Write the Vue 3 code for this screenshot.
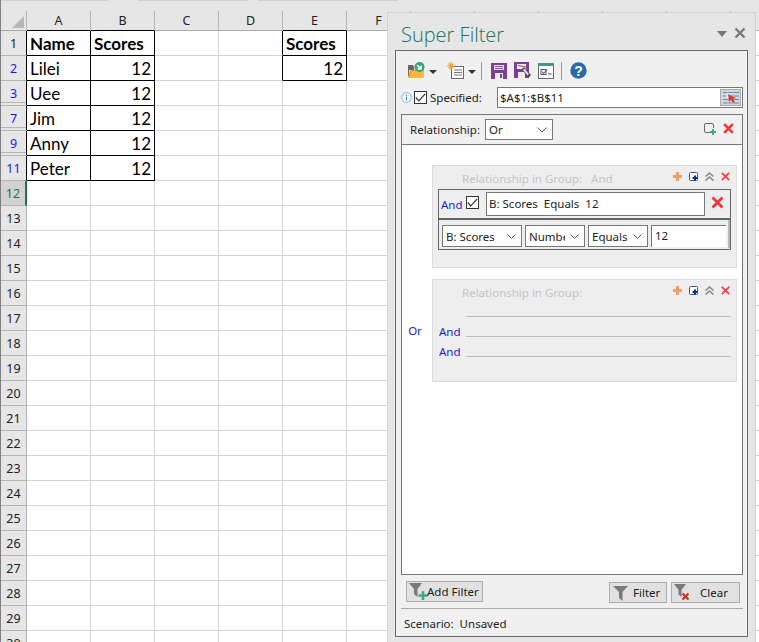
<script setup>
const colNames = ['A', 'B', 'C', 'D', 'E', 'F', 'G', 'H', 'I', 'J', 'K', 'L']
const rowNames = [1, 2, 3, 7, 9, 11]
for (let n = 12; n <= 30; n++) rowNames.push(n)

const filteredRows = [2, 3, 7, 9, 11]
const hiddenAfter = [3, 7, 9]

const data = {
  '0-0': { text: 'Name', bold: true },
  '0-1': { text: 'Scores', bold: true },
  '1-0': { text: 'Lilei' },
  '1-1': { text: '12', num: true },
  '2-0': { text: 'Uee' },
  '2-1': { text: '12', num: true },
  '3-0': { text: 'Jim' },
  '3-1': { text: '12', num: true },
  '4-0': { text: 'Anny' },
  '4-1': { text: '12', num: true },
  '5-0': { text: 'Peter' },
  '5-1': { text: '12', num: true },
  '0-4': { text: 'Scores', bold: true },
  '1-4': { text: '12', num: true }
}

const cellAt = (r, c) => data[r + '-' + c] || { text: '' }
const isBoxed = (r, c) => (r < 6 && c < 2) || (r < 2 && (c === 4 || c === 3))
const headBoxed = (c) => c === 0 || c === 1 || c === 4
</script>

<template>
  <div class="page">
    <div class="sheet">
      <div class="tabs">
        <span class="tab t1"></span>
        <span class="tab t2"></span>
        <span class="tab t3"></span>
      </div>
      <div class="grid">
        <div class="corner"><span class="corner-mark"></span></div>
        <!-- columns past F sit under the pane, so they carry no label -->
        <div v-for="(name, c) in colNames" :key="name" class="col-head" :class="{ boxed: headBoxed(c) }">{{ c < 6 ? name : '' }}</div>
        <template v-for="(row, r) in rowNames" :key="row">
          <div
            class="row-head"
            :class="{
              filtered: filteredRows.includes(row),
              hidden: hiddenAfter.includes(row),
              boxed: r < 6,
              active: row === 12
            }"
          >{{ row }}</div>
          <div
            v-for="(name, c) in colNames"
            :key="name"
            class="cell"
            :class="{ boxed: isBoxed(r, c), bold: cellAt(r, c).bold, num: cellAt(r, c).num, open: c === 3 }"
          >{{ cellAt(r, c).text }}</div>
        </template>
      </div>
    </div>

    <div class="pane">
      <div class="pane-title">
        <span class="title-text">Super Filter</span>
        <svg class="pane-caret" width="10" height="6" viewBox="0 0 10 6"><path d="M0 0h10L5 6z" fill="#777"/></svg>
        <svg class="pane-close" width="12" height="12" viewBox="0 0 12 12"><path d="M1.500 1.500l9 9M10.500 1.500l-9 9" stroke="#777" stroke-width="2.400" fill="none"/></svg>
      </div>

      <div class="pane-body">
        <div class="toolbar">
          <svg class="tool first" width="17" height="17" viewBox="0 0 17 17">
            <path d="M0 3h5l1 2v3H1v6H0z" fill="#666"/>
            <path d="M0 16l2-8h5l1-1h8v8l-1 1z" fill="#f5b942"/>
            <path d="M1 15.500l2-7h12" fill="none" stroke="#e39a1c"/>
            <circle cx="11.500" cy="5" r="5" fill="#2fa56f"/>
            <path d="M9 3l3.500 3.500M13 3.500v3.500H9.500" fill="none" stroke="#fff" stroke-width="1.500"/>
          </svg>
          <svg class="caret" width="8" height="4" viewBox="0 0 8 4"><path d="M0 0h8L4 4z" fill="#333"/></svg>
          <svg class="tool gap-a" width="17" height="17" viewBox="0 0 17 17">
            <rect x="4.500" y="4.500" width="12" height="12" fill="#fff" stroke="#666"/>
            <path d="M7 8h8M7 10.500h8M7 13h8" stroke="#777"/>
            <path d="M4 0v8M0 4h8M1.500 1.500l5 5M6.500 1.500l-5 5" stroke="#f2a33a" stroke-width="1.200"/>
          </svg>
          <svg class="caret" width="8" height="4" viewBox="0 0 8 4"><path d="M0 0h8L4 4z" fill="#333"/></svg>
          <span class="tool-sep sep-a"></span>
          <svg class="tool" width="16" height="16" viewBox="0 0 16 16">
            <path d="M0 0h16v16H0z" fill="#7b3f98"/>
            <path d="M3 2h10v5H3z" fill="#e6d5ee"/>
            <path d="M4 3.500h8M4 5.500h8" stroke="#7b3f98" stroke-width=".8"/>
            <path d="M4 10h8v6H4z" fill="#f1eaf5"/>
            <path d="M9 11h2v4H9z" fill="#7b3f98"/>
          </svg>
          <svg class="tool gap-b" width="17" height="17" viewBox="0 0 17 17">
            <path d="M0 0h15v16H0z" fill="#7b3f98"/>
            <path d="M3 2h9v5H3z" fill="#f4eef7"/>
            <path d="M4 3.500l8 1.500" stroke="#d9412f" stroke-width="1.200"/>
            <path d="M4 10h7v6H4z" fill="#f1eaf5"/>
            <path d="M8 7l2-2 7 8-3 3z" fill="#444"/>
            <path d="M9 8l1.500-1.500 4.500 5.500-1.500 1.500z" fill="#ddd"/>
          </svg>
          <svg class="tool gap-b" width="16" height="16" viewBox="0 0 16 16">
            <rect x=".5" y=".5" width="15" height="15" fill="#fff" stroke="#666"/>
            <path d="M0 0h16v3H0z" fill="#3f9a7b"/>
            <rect x="3" y="6.500" width="5" height="5" fill="#fff" stroke="#555"/>
            <path d="M4 8.500l1.500 2 3.500-4" fill="none" stroke="#2b5f9e" stroke-width="1.100"/>
            <path d="M10 11h3.500" stroke="#444"/>
          </svg>
          <span class="tool-sep sep-b"></span>
          <svg class="tool" width="17" height="17" viewBox="0 0 17 17">
            <circle cx="8.500" cy="8.500" r="8.200" fill="#2a6aa8"/>
            <text x="8.500" y="13.500" text-anchor="middle" class="help-mark">?</text>
          </svg>
        </div>

        <div class="range-row">
          <svg width="11" height="11" viewBox="0 0 11 11">
            <circle cx="5.500" cy="5.500" r="4.900" fill="#f4f8fc" stroke="#8db4dc"/>
            <path d="M5.500 2.500v1.200M5.500 4.800v3.500" stroke="#3f7fc0" stroke-width="1.100"/>
          </svg>
          <span class="check">
            <svg width="11" height="9" viewBox="0 0 11 9"><path d="M.8 4.500l3 3.400L10.200.8" fill="none" stroke="#333" stroke-width="1.200"/></svg>
          </span>
          <span class="range-label">Specified:</span>
          <div class="range-input">
            <span class="range-text">$A$1:$B$11</span>
            <span class="range-btn">
              <svg width="16" height="13" viewBox="0 0 16 13">
                <path d="M0 1.500h16M0 5h16M0 8.500h16M0 12h16" stroke="#5b87b8"/>
                <path d="M5 0v13M10 0v13" stroke="#b9cde2"/>
                <path d="M3 2h5v5H3z" fill="#e0e8f0"/>
                <path d="M5 3l8 4-3 1 2 3-2 1-2-3-2 2z" fill="#d9412f"/>
              </svg>
            </span>
          </div>
        </div>

        <div class="rel-box">
          <div class="rel-head">
            <span class="rel-label">Relationship:</span>
            <div class="select rel-select">
              <span class="select-text">Or</span>
              <svg class="chev" width="10" height="6" viewBox="0 0 10 6"><path d="M.5.500L5 5 9.500.5" fill="none" stroke="#555"/></svg>
            </div>
            <svg class="rel-add" width="12" height="12" viewBox="0 0 12 12">
              <path d="M6 9.500H2a1.500 1.500 0 0 1-1.500-1.500V2A1.500 1.500 0 0 1 2 .5h6A1.500 1.500 0 0 1 9.500 2v3" fill="none" stroke="#666"/>
              <path d="M9 6v6M6 9h6" stroke="#3fa97f" stroke-width="2"/>
            </svg>
            <svg class="rel-del" width="11" height="11" viewBox="0 0 11 11"><path d="M1.200 1.200l8.600 8.600M9.800 1.200l-8.600 8.600" stroke="#f0343a" stroke-width="2.600"/></svg>
          </div>

          <div class="rel-body">
            <div class="group-line">
              <span class="or-label"></span>
              <div class="group">
                <div class="group-head">
                  <span class="group-title">Relationship in Group:&nbsp;&nbsp;&nbsp;And</span>
                  <div class="group-tools">
                    <svg width="9" height="9" viewBox="0 0 9 9"><path d="M4.500 0v9M0 4.500h9" stroke="#eba06a" stroke-width="3"/></svg>
                    <svg width="9" height="9" viewBox="0 0 9 9"><rect x=".5" y=".5" width="8" height="8" rx="1" fill="#fff" stroke="#1f5fa8"/><path d="M6 3.500v5M3.500 6h5" stroke="#0a2f8c" stroke-width="2"/></svg>
                    <svg width="9" height="9" viewBox="0 0 9 9"><path d="M.5 4.500l4-3.500 4 3.500M.5 8.500l4-3.500 4 3.500" fill="none" stroke="#888" stroke-width="1.500"/></svg>
                    <svg width="9" height="9" viewBox="0 0 9 9"><path d="M.8.800l7.400 7.400M8.200.8L.8 8.200" stroke="#f0444a" stroke-width="1.800"/></svg>
                  </div>
                </div>
                <div class="condition">
                  <div class="cond-top">
                    <span class="and-label">And</span>
                    <span class="check small">
                      <svg width="11" height="9" viewBox="0 0 11 9"><path d="M.8 4.500l3 3.400L10.200.8" fill="none" stroke="#333" stroke-width="1.200"/></svg>
                    </span>
                    <div class="cond-text">B: Scores&nbsp;&nbsp;Equals&nbsp;&nbsp;12</div>
                    <svg class="cond-del" width="13" height="13" viewBox="0 0 13 13"><path d="M1.500 1.500l10 10M11.500 1.500l-10 10" stroke="#f0343a" stroke-width="2.800"/></svg>
                  </div>
                  <div class="cond-edit">
                    <div class="select s-field">
                      <span class="select-text">B: Scores</span>
                      <svg class="chev" width="9" height="5" viewBox="0 0 9 5"><path d="M.5.500L4.500 4.500 8.500.5" fill="none" stroke="#555"/></svg>
                    </div>
                    <div class="select s-type">
                      <span class="select-text clip">Number</span>
                      <svg class="chev" width="9" height="5" viewBox="0 0 9 5"><path d="M.5.500L4.500 4.500 8.500.5" fill="none" stroke="#555"/></svg>
                    </div>
                    <div class="select s-op">
                      <span class="select-text">Equals</span>
                      <svg class="chev" width="9" height="5" viewBox="0 0 9 5"><path d="M.5.500L4.500 4.500 8.500.5" fill="none" stroke="#555"/></svg>
                    </div>
                    <div class="value-box">12</div>
                  </div>
                </div>
              </div>
            </div>

            <div class="group-line second">
              <span class="or-label">Or</span>
              <div class="group">
                <div class="group-head">
                  <span class="group-title">Relationship in Group:</span>
                  <div class="group-tools">
                    <svg width="9" height="9" viewBox="0 0 9 9"><path d="M4.500 0v9M0 4.500h9" stroke="#eba06a" stroke-width="3"/></svg>
                    <svg width="9" height="9" viewBox="0 0 9 9"><rect x=".5" y=".5" width="8" height="8" rx="1" fill="#fff" stroke="#1f5fa8"/><path d="M6 3.500v5M3.500 6h5" stroke="#0a2f8c" stroke-width="2"/></svg>
                    <svg width="9" height="9" viewBox="0 0 9 9"><path d="M.5 4.500l4-3.500 4 3.500M.5 8.500l4-3.500 4 3.500" fill="none" stroke="#888" stroke-width="1.500"/></svg>
                    <svg width="9" height="9" viewBox="0 0 9 9"><path d="M.8.800l7.400 7.400M8.200.8L.8 8.200" stroke="#f0444a" stroke-width="1.800"/></svg>
                  </div>
                </div>
                <div class="blank-rows">
                  <div class="blank-row"><span class="and-label"></span><span class="blank-line"></span></div>
                  <div class="blank-row"><span class="and-label">And</span><span class="blank-line"></span></div>
                  <div class="blank-row"><span class="and-label">And</span><span class="blank-line"></span></div>
                </div>
              </div>
            </div>
          </div>
        </div>

        <div class="actions">
          <button class="btn add-btn">
            <svg width="20" height="18" viewBox="0 0 20 18">
              <path d="M0 0h13L8.500 6v8L5 11V6z" fill="#7a7a7a"/>
              <path d="M14 8v9M9.500 12.500h9" stroke="#3fa97f" stroke-width="2.600"/>
            </svg>
            <span>Add Filter</span>
          </button>
          <button class="btn filter-btn">
            <svg width="16" height="16" viewBox="0 0 16 16"><path d="M0 1h15L9.500 7v9L6 13V7z" fill="#7a7a7a"/></svg>
            <span>Filter</span>
          </button>
          <button class="btn clear-btn">
            <svg width="18" height="17" viewBox="0 0 18 17">
              <path d="M0 0h12L7.500 6v7L4.500 10.500V6z" fill="#7a7a7a"/>
              <path d="M8.500 9.500l6 6M14.500 9.500l-6 6" stroke="#d0301f" stroke-width="2.200"/>
            </svg>
            <span>Clear</span>
          </button>
        </div>

        <div class="scenario">Scenario:&nbsp;&nbsp;Unsaved</div>
      </div>
    </div>
  </div>
</template>

<style scoped>
.page {
  position: relative;
  width: 759px;
  height: 642px;
  overflow: hidden;
  background: #fff;
  font-family: "Noto Sans", "Open Sans", sans-serif;
  font-size: 11.5px;
  color: #222;
}

/* worksheet */
.sheet {
  width: 759px;
  height: 642px;
  box-sizing: border-box;
  border-left: 1px solid #808080;
}
.tabs {
  height: 11px;
  display: flex;
  gap: 10px;
  background: #e6e6e6;
}
.tab {
  height: 1px;
  background: #cfcfcf;
}
.t1 { width: 107px; }
.t2 { width: 110px; margin-left: 20px; }
.t3 { width: 140px; }
.grid {
  display: grid;
  grid-template-columns: 26px repeat(12, 64px);
  grid-auto-rows: 25px;
  grid-template-rows: 20px;
}
.corner {
  background: #e6e6e6;
  border-right: 1px solid #b5b5b5;
  border-bottom: 1px solid #ababab;
  display: flex;
  justify-content: flex-end;
  align-items: flex-end;
  padding: 0 2px 2px 0;
}
.corner-mark {
  width: 0;
  height: 0;
  border-left: 12px solid transparent;
  border-bottom: 12px solid #b7b7b7;
}
.col-head {
  background: #e6e6e6;
  border-right: 1px solid #b5b5b5;
  border-bottom: 1px solid #ababab;
  text-align: center;
  line-height: 19px;
  font-size: 12.5px;
  color: #222;
}
.col-head.boxed {
  border-bottom-color: #000;
}
.row-head {
  background: #e6e6e6;
  border-right: 1px solid #b5b5b5;
  border-bottom: 1px solid #b5b5b5;
  text-align: center;
  line-height: 26px;
  font-size: 12.5px;
  color: #222;
}
.row-head.boxed {
  border-right-color: #000;
}
.row-head.filtered {
  color: #1a1ae6;
}
.row-head.hidden {
  box-shadow: inset 0 -2px 0 #e6e6e6, inset 0 -3px 0 #b5b5b5;
}
.row-head.active {
  background: #d2d2d2;
  color: #217346;
  border-right: 2px solid #217346;
}
.cell {
  border-right: 1px solid #d4d4d4;
  border-bottom: 1px solid #d4d4d4;
  padding: 0 3px;
  line-height: 25px;
  font-family: "Lato", "Open Sans", sans-serif;
  font-size: 17px;
  color: #000;
  white-space: nowrap;
}
.cell.boxed {
  border-right-color: #000;
  border-bottom-color: #000;
}
.cell.open {
  border-bottom-color: #d4d4d4;
}
.cell.bold {
  font-weight: 700;
}
.cell.num {
  text-align: right;
}

/* floating pane */
.pane {
  position: absolute;
  left: 387px;
  top: 12px;
  width: 369px;
  height: 630px;
  box-sizing: border-box;
  background: #e6e6e6;
  border: 1px solid #d2d2d2;
  border-bottom: 0;
  padding: 0 7px 5px 7px;
  display: flex;
  flex-direction: column;
}
.pane-title {
  height: 37px;
  display: flex;
  align-items: center;
  flex: none;
}
.title-text {
  margin-left: 6px;
  margin-top: 6px;
  font-family: "Open Sans", "Noto Sans", sans-serif;
  font-weight: 300;
  font-size: 20px;
  color: #217361;
}
.pane-caret {
  margin-left: auto;
  margin-top: 5px;
}
.pane-close {
  margin-left: 7px;
  margin-right: 2px;
  margin-top: 3px;
}
.pane-body {
  flex: 1;
  min-height: 0;
  background: #f0f0f0;
  border: 1px solid #6a6a6a;
  display: flex;
  flex-direction: column;
  padding: 0 4px 0 5px;
}
.toolbar {
  height: 36px;
  display: flex;
  align-items: center;
  flex: none;
  padding: 3px 0 0 7px;
  box-sizing: border-box;
}
.tool.gap-a {
  margin-left: 10px;
}
.tool.gap-b {
  margin-left: 7px;
}
.caret {
  margin-left: 4px;
  margin-top: 2px;
}
.tool-sep {
  width: 1px;
  height: 18px;
  background: #999;
}
.sep-a {
  margin: 0 9px 0 5px;
}
.sep-b {
  margin: 0 8px 0 7px;
}
.help-mark {
  font-family: "Liberation Sans", sans-serif;
  font-weight: 700;
  font-size: 14px;
  fill: #fff;
}

.range-row {
  height: 21px;
  display: flex;
  align-items: center;
  flex: none;
}
.check {
  width: 13px;
  height: 13px;
  box-sizing: border-box;
  background: #fff;
  border: 1px solid #333;
  display: inline-flex;
  align-items: center;
  justify-content: center;
  margin-left: 2px;
  flex: none;
}
.range-label {
  margin-left: 3px;
  width: 67px;
}
.range-input {
  flex: 1;
  height: 21px;
  box-sizing: border-box;
  background: #fff;
  border: 1px solid #777;
  display: flex;
  align-items: center;
  justify-content: space-between;
  padding: 0 1px 0 2px;
}
.range-text {
  font-size: 11.5px;
}
.range-btn {
  width: 21px;
  height: 17px;
  box-sizing: border-box;
  background: #d6d6d6;
  border: 1px solid #aaa;
  display: flex;
  align-items: center;
  justify-content: center;
}

.rel-box {
  margin-top: 6px;
  height: 461px;
  box-sizing: border-box;
  border: 1px solid #777;
  display: flex;
  flex-direction: column;
  flex: none;
}
.rel-head {
  height: 30px;
  box-sizing: border-box;
  border-bottom: 1px solid #777;
  display: flex;
  align-items: center;
  padding-left: 8px;
  flex: none;
}
.rel-label {
  width: 75px;
}
.select {
  box-sizing: border-box;
  background: #fff;
  border: 1px solid #777;
  display: flex;
  align-items: center;
  justify-content: space-between;
  padding: 0 5px 0 3px;
  overflow: hidden;
}
.rel-select {
  width: 68px;
  height: 21px;
}
.select-text {
  white-space: nowrap;
}
.select-text.clip {
  width: 36px;
  overflow: hidden;
}
.rel-add {
  margin-left: auto;
  margin-top: -2px;
}
.rel-del {
  margin: -2px 8px 0 7px;
}
.rel-body {
  flex: 1;
  background: #fff;
  padding: 20px 4px 0 0;
}
.group-line {
  display: flex;
  align-items: center;
}
.group-line.second {
  margin-top: 11px;
}
.or-label {
  width: 30px;
  flex: none;
  text-align: center;
  padding-right: 4px;
  box-sizing: border-box;
  color: #1a1ae6;
}
.group {
  width: 305px;
  height: 103px;
  box-sizing: border-box;
  background: #eeeeee;
  border: 1px solid #dcdcdc;
  padding: 0 5px;
}
.group-head {
  height: 23px;
  display: flex;
  align-items: center;
  justify-content: space-between;
  padding-left: 24px;
}
.group-title {
  color: #c4c4c4;
  white-space: nowrap;
  margin-top: 1px;
}
.group-tools {
  display: flex;
  gap: 7px;
  margin-top: -3px;
  margin-right: 1px;
}
.condition {
  width: 293px;
  height: 61px;
  box-sizing: border-box;
  border: 1px solid #666;
}
.cond-top {
  height: 30px;
  box-sizing: border-box;
  border-bottom: 2px solid #666;
  display: flex;
  align-items: center;
  padding-left: 2px;
}
.and-label {
  color: #1a1ae6;
  width: 22px;
  flex: none;
}
.check.small {
  margin-left: 3px;
  margin-top: -3px;
}
.cond-text {
  width: 219px;
  height: 24px;
  box-sizing: border-box;
  background: #fff;
  border: 1px solid #777;
  line-height: 21px;
  padding-left: 2px;
  margin-left: 7px;
  white-space: nowrap;
}
.cond-del {
  margin-left: 6px;
  margin-top: -3px;
}
.cond-edit {
  height: 28px;
  box-sizing: border-box;
  display: flex;
  align-items: center;
  gap: 3px;
  padding: 4px 0 0 3px;
  border-right: 2px solid #bbb;
}
.cond-edit .select {
  height: 22px;
}
.s-field { width: 80px; }
.s-type { width: 60px; }
.s-op { width: 60px; }
.value-box {
  width: 75px;
  height: 22px;
  box-sizing: border-box;
  background: #fff;
  border-top: 1px solid #777;
  border-left: 1px solid #777;
  padding-left: 3px;
  line-height: 20px;
}
.blank-rows {
  margin-top: -6px;
}
.blank-row {
  height: 20px;
  display: flex;
  align-items: flex-end;
  padding-left: 1px;
}
.blank-row .and-label {
  width: 27px;
  line-height: 16px;
  margin-bottom: -3px;
}
.blank-line {
  flex: 1;
  height: 1px;
  background: #bdbdbd;
}

.actions {
  display: flex;
  align-items: flex-start;
  padding: 6px 3px 0 5px;
  height: 34px;
  box-sizing: border-box;
  flex: none;
  border-bottom: 1px solid #aaa;
}
.btn {
  height: 21px;
  box-sizing: border-box;
  background: #e1e1e1;
  border: 1px solid #adadad;
  padding: 0;
  display: flex;
  align-items: center;
  font-family: inherit;
  font-size: 11.5px;
  color: #222;
  white-space: nowrap;
}
.add-btn {
  width: 77px;
  padding-left: 2px;
  gap: 0;
}
.add-btn span {
  margin-left: -2px;
}
.filter-btn {
  width: 58px;
  margin-left: auto;
  margin-top: 1px;
  padding-left: 3px;
  gap: 4px;
}
.clear-btn {
  width: 69px;
  margin-left: 4px;
  margin-top: 1px;
  padding-left: 2px;
  gap: 8px;
}
.scenario {
  padding: 7px 0 0 3px;
}
</style>
